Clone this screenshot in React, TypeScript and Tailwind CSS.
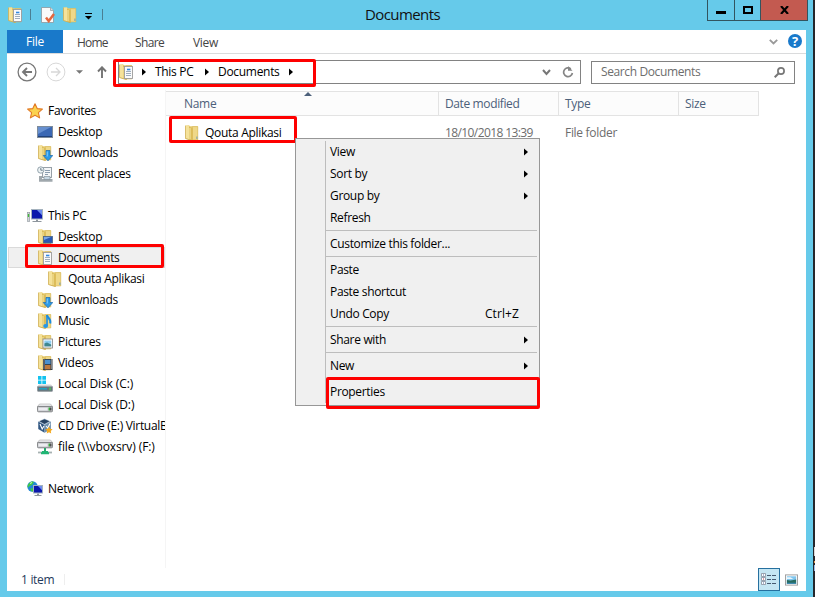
import React from "react";
import clsx from "clsx";

type IconName =
  | "folder"
  | "documents"
  | "desktop"
  | "desktopFolder"
  | "downloads"
  | "recent"
  | "computer"
  | "music"
  | "pictures"
  | "videos"
  | "diskC"
  | "diskD"
  | "cd"
  | "netDrive"
  | "network"
  | "star";

interface TreeItem {
  label: string;
  icon: IconName;
  level: number;
  selected?: boolean;
  wide?: boolean;
}

interface MenuEntry {
  label: string;
  shortcut?: string;
  submenu?: boolean;
}

const tree: (TreeItem | null)[] = [
  { label: "Favorites", icon: "star", level: 0 },
  { label: "Desktop", icon: "desktop", level: 1 },
  { label: "Downloads", icon: "downloads", level: 1 },
  { label: "Recent places", icon: "recent", level: 1 },
  null,
  { label: "This PC", icon: "computer", level: 0 },
  { label: "Desktop", icon: "desktopFolder", level: 1 },
  { label: "Documents", icon: "documents", level: 1, selected: true },
  { label: "Qouta Aplikasi", icon: "folder", level: 2 },
  { label: "Downloads", icon: "downloads", level: 1 },
  { label: "Music", icon: "music", level: 1 },
  { label: "Pictures", icon: "pictures", level: 1 },
  { label: "Videos", icon: "videos", level: 1 },
  { label: "Local Disk (C:)", icon: "diskC", level: 1, wide: true },
  { label: "Local Disk (D:)", icon: "diskD", level: 1, wide: true },
  { label: "CD Drive (E:) VirtualB", icon: "cd", level: 1 },
  { label: "file (\\\\vboxsrv) (F:)", icon: "netDrive", level: 1, wide: true },
  null,
  { label: "Network", icon: "network", level: 0 },
];

const menuGroups: MenuEntry[][] = [
  [
    { label: "View", submenu: true },
    { label: "Sort by", submenu: true },
    { label: "Group by", submenu: true },
    { label: "Refresh" },
  ],
  [{ label: "Customize this folder..." }],
  [
    { label: "Paste" },
    { label: "Paste shortcut" },
    { label: "Undo Copy", shortcut: "Ctrl+Z" },
  ],
  [{ label: "Share with", submenu: true }],
  [{ label: "New", submenu: true }],
  [{ label: "Properties" }],
];

const FolderShape = () => (
  <>
    <path d="M1.5.8 5 .2 6 1.2h7.8V15H5L1.5 13.8Z" fill="#e6ca72" />
    <path d="M8.4 1.6h5.4V15H8.4Z" fill="#efd888" stroke="#d3b253" strokeWidth=".5" />
    <path d="M1.5.6H5v13.6l-3.5-1Z" fill="#f5e29a" />
    <path d="M5 1.8 8.8 3.2V16L5 14.6Z" fill="#dcbc59" />
    <path d="M6 3v11.4" stroke="#f7e9a9" strokeWidth="1" />
    <path d="M1.5.6v12.9L5 14.6 8.8 16" fill="none" stroke="#c6a344" strokeWidth=".6" />
  </>
);

const DiskShape = ({ y = 8 }: { y?: number }) => (
  <g transform={`translate(0 ${y})`}>
    <path d="M2.5 0h11L16 3H0Z" fill="#eeeef0" stroke="#999" strokeWidth=".5" />
    <rect x=".4" y="2.4" width="15.2" height="5.4" rx="1.2" fill="#c9cacd" stroke="#66686c" strokeWidth=".8" />
    <rect x="1.5" y="3.8" width="9" height="2.6" fill="#ececf0" />
    <path d="M11.6 3.5h1.4v3h-1.4Z" fill="#34a93a" />
    <path d="M13.2 3.5h1.2v3h-1.2Z" fill="#333" />
  </g>
);

const Monitor = ({ x, y, w, h }: { x: number; y: number; w: number; h: number }) => (
  <>
    <rect x={x + w / 2 - 1} y={y + h} width="2" height="2" fill="#8e969d" />
    <path d={`M${x + 1.5} ${y + h + 2}h${w - 3}`} stroke="#8e969d" />
    <rect x={x} y={y} width={w} height={h} fill="#a4b2be" />
    <rect x={x + 1} y={y + 1} width={w - 2} height={h - 2} fill="#0b18ac" />
    <path d={`M${x + w / 2} ${y + 1}h${w / 2 - 1}v${h / 2}Z`} fill="#6d8cf0" />
  </>
);

const drawings: Record<IconName, React.ReactNode> = {
  folder: (
    <>
      <FolderShape />
      <path d="M12.4 11.5h1v2.5h-1Z" fill="#6f9fb8" />
    </>
  ),
  documents: (
    <>
      <FolderShape />
      <rect x="6.5" y="2.5" width="8" height="12" fill="#fbfbfb" stroke="#9c9c9c" strokeWidth=".9" />
      <path d="M8 7.5h5M8 9.5h5M8 11.5h5" stroke="#94a5b5" strokeWidth=".9" />
      <path d="M9 5.5h3.4" stroke="#3188e0" strokeWidth="1.6" />
    </>
  ),
  desktop: (
    <>
      <rect x=".5" y="2.5" width="15" height="11" fill="#3b68b4" stroke="#7d8b9b" />
      <path d="M1 3h13L1 10Z" fill="#6790d0" />
      <path d="M1 12.5h14" stroke="#20417b" />
    </>
  ),
  desktopFolder: (
    <>
      <FolderShape />
      <rect x="6.5" y="7.5" width="9" height="6.5" fill="#2858b2" stroke="#4d6788" strokeWidth=".8" />
      <path d="m7 8 7 0-7 3Z" fill="#78a6e8" />
      <path d="M8 15.3h6" stroke="#70777e" />
    </>
  ),
  downloads: (
    <>
      <FolderShape />
      <path d="M9 5.5h4v5h2.8L11 15.8 6.2 10.5H9Z" fill="#2c9be9" stroke="#1767ad" strokeWidth=".7" />
      <path d="M10.2 6.5v5" stroke="#8bd2ff" />
    </>
  ),
  recent: (
    <>
      <rect x="5.5" y="1.5" width="9" height="10" fill="#f4f6f8" stroke="#8d979e" strokeWidth=".9" />
      <path d="M8 4.5h5M8 6.5h5M8 8.5h3" stroke="#7f94a6" strokeWidth=".9" />
      <circle cx="3.8" cy="4" r="3.2" fill="#edf3f5" stroke="#8a9ba5" strokeWidth=".9" />
      <path d="M3.8 2v2.2h2" fill="none" stroke="#4c6170" strokeWidth=".8" />
      <path d="M2 10h3v3h10.5v2.7H2Z" fill="#a0a8ad" />
      <path d="M7 10.5h6v3H7Z" fill="#c7d8e4" stroke="#7b868e" strokeWidth=".6" />
    </>
  ),
  computer: (
    <>
      <rect x=".5" y="4.5" width="2.2" height="9" fill="#d0d4d7" stroke="#8e969d" strokeWidth=".6" />
      <path d="M1.5 6v3" stroke="#3fba36" strokeWidth="1.2" />
      <Monitor x={4} y={1} w={12} h={10.5} />
    </>
  ),
  music: (
    <>
      <FolderShape />
      <path d="M10 2c.5 3.4 4.4 3.4 3.2 8.5" fill="none" stroke="#198ce0" strokeWidth="2" />
      <path d="M10 2v11" stroke="#198ce0" strokeWidth="1.6" />
      <ellipse cx="8.6" cy="13" rx="2.4" ry="2" fill="#2797e8" />
    </>
  ),
  pictures: (
    <>
      <FolderShape />
      <rect x="6" y="5" width="9.5" height="9" fill="#fff" stroke="#8f8f8f" strokeWidth=".9" />
      <rect x="7.3" y="6.5" width="7" height="3.3" fill="#8dcdf1" />
      <path d="M7.3 9.4 10 8.5l4.3 2v2h-7Z" fill="#3f8791" />
    </>
  ),
  videos: (
    <>
      <FolderShape />
      <rect x="6" y="4" width="9.5" height="11" fill="#343b43" />
      <rect x="8" y="4.8" width="5.5" height="4.3" fill="#4991cf" />
      <rect x="8" y="10" width="5.5" height="4.3" fill="#bd793c" />
      <path d="M7 4.5v10M14.5 4.5v10" stroke="#e0e0e0" strokeWidth=".9" strokeDasharray="1 1" />
    </>
  ),
  diskC: (
    <>
      <path d="M1 0h3.5v3.7H1ZM5.3 0H9v3.7H5.3ZM1 4.5h3.5V8H1ZM5.3 4.5H9V8H5.3Z" fill="#12c2ef" />
      <path d="m2 8.5 12 0 2 2.5H0Z" fill="#d4d7da" />
      <rect x=".3" y="10.4" width="15.4" height="5" rx=".8" fill="#66767f" stroke="#9a9fa3" strokeWidth=".7" />
      <path d="M2 12.8h8" stroke="#25a0be" strokeWidth="1.6" />
      <path d="M13 11.5v2.8" stroke="#48df46" strokeWidth="1.2" />
    </>
  ),
  diskD: <DiskShape y={7} />,
  cd: (
    <>
      <path d="M7.5.5 14 3.5V11l-6.5 4L1 11V3.5Z" fill="#b7c8d8" />
      <path d="m1.4 3.7 6 3.2v7.5L1.4 11Z" fill="#315681" />
      <path d="m2.5 3.2 5-2 5 2-5 2.7Z" fill="#274263" />
      <path d="m13.8 3.7-6 3.2v7.5l6-3.4Z" fill="#6d8fad" />
      <path d="m3 6 2.2 5L7 8M9 8l1.8 2L13 5.5" fill="none" stroke="#fff" strokeWidth="1.1" />
      <path d="m12 8.6 1.1 2.2 2.5.4-1.8 1.7.4 2.5-2.2-1.2-2.3 1.2.5-2.5-1.8-1.7 2.5-.4Z" fill="#f4a91d" />
    </>
  ),
  netDrive: (
    <>
      <DiskShape y={1} />
      <path d="M7 9h2v3.5H7Z" fill="#28a86b" />
      <path d="M1 13.5h14" stroke="#a6b2b2" strokeWidth="1.8" />
      <path d="M5 12h6v1.3h1v1.9H4v-1.9h1Z" fill="#20b574" />
    </>
  ),
  network: (
    <>
      <circle cx="5.5" cy="5.5" r="5.2" fill="#2489d6" />
      <path d="M2 2.4C4 0 6 .3 7 1L5 4 2.5 5 1 6.8C0 5 1 3 2 2.4ZM4 7l3 1-1 2.5C4 11 3 9 4 7Z" fill="#42c944" />
      <path d="M3 2.5 5 1.5" stroke="#d3f5cb" />
      <Monitor x={6} y={4} w={10} h={8.5} />
    </>
  ),
  star: (
    <path
      d="m8 .8 2.2 4.8 5.2.5-4 3.5 1.2 5.3L8 12.2l-4.6 2.7 1.2-5.3-4-3.5 5.2-.5Z"
      fill="#fbd24e"
      stroke="#e27a25"
      strokeWidth="1.1"
      strokeLinejoin="round"
    />
  ),
};

const Icon = ({ name }: { name: IconName }) => (
  <svg viewBox="0 0 16 16" className="h-4 w-4 shrink-0">
    {drawings[name]}
  </svg>
);

const RightArrow = ({ className }: { className?: string }) => (
  <svg viewBox="0 0 4 8" className={clsx("h-2 w-1 shrink-0", className)}>
    <path d="M0 .5v7L4 4Z" fill="currentColor" />
  </svg>
);

// Red frame that marks a step of the walkthrough
const Highlight = ({ className }: { className: string }) => (
  <div className={clsx("pointer-events-none absolute rounded-[2px] border-[3px] border-[#fe0000]", className)} />
);

const TitleBar = () => (
  <header className="relative flex h-[30px] items-start justify-between">
    <div className="flex h-[29px] items-center pl-[7px]">
      <Icon name="documents" />
      <span className="ml-[7px] h-[11px] w-px bg-[#4a7f93]" />
      <svg viewBox="0 0 16 16" className="ml-[9px] h-4 w-4">
        <path d="M1.5.5h9l3 3v12h-12Z" fill="#fafafa" stroke="#8b989e" strokeWidth=".8" />
        <path d="M10.5.5v3h3" fill="#ddd" stroke="#8b989e" strokeWidth=".7" />
        <path d="m6 10.5 2.7 3.5L14 7" fill="none" stroke="#e3683f" strokeWidth="2.5" />
      </svg>
      <span className="ml-[6px] flex">
        <Icon name="folder" />
      </span>
      <svg viewBox="0 0 7 7" className="ml-[7px] mt-[3px] h-[7px] w-[7px]">
        <path d="M0 .5h7" stroke="#000" />
        <path d="M0 3h7L3.5 6.5Z" fill="#000" />
      </svg>
      <span className="ml-[10px] h-[11px] w-px bg-[#4a7f93]" />
    </div>
    <h1 className="absolute inset-x-0 top-[4px] mx-auto w-[120px] -translate-x-[4px] text-center text-[15px] leading-[21px] tracking-[-0.6px] text-[#111]">
      Documents
    </h1>
    <div className="mr-[5px] flex h-[21px] border border-t-0 border-[#32545f]">
      <button className="flex w-[27px] items-center justify-center border-r border-[#32545f]" aria-label="Minimize">
        <span className="mt-[5px] h-[3px] w-[10px] bg-black" />
      </button>
      <button className="flex w-[26px] items-center justify-center border-r border-[#32545f]" aria-label="Maximize">
        <span className="h-2 w-[10px] border-2 border-black" />
      </button>
      <button className="flex w-[46px] items-center justify-center bg-[#c35a50]" aria-label="Close">
        <svg viewBox="0 0 9 8" className="h-2 w-[9px]">
          <path d="m1 0 7 8M8 0 1 8" stroke="#000" strokeWidth="2.1" />
        </svg>
      </button>
    </div>
  </header>
);

const Ribbon = () => (
  <nav className="flex h-6 items-stretch border-b border-[#dadbdc] text-[#444]">
    <span className="-mb-px mr-[14px] flex h-[23px] w-14 items-center justify-center bg-[#1979ca] text-white">File</span>
    <span className="flex w-[58px] items-center pt-[3px] tracking-[-0.8px]">Home</span>
    <span className="flex w-[58px] items-center pt-[3px] tracking-[-0.6px]">Share</span>
    <span className="flex items-center pt-[3px]">View</span>
    <div className="ml-auto flex items-center gap-[10px] pr-1">
      <svg viewBox="0 0 9 6" className="h-[6px] w-[9px]">
        <path d="m.8 .8 3.7 3.7L8.2.8" fill="none" stroke="#999" strokeWidth="1.8" />
      </svg>
      <span className="-mt-px flex h-[14px] w-[14px] items-center justify-center rounded-full bg-[#1979ca] text-[13px] font-bold leading-none tracking-normal text-white">
        ?
      </span>
    </div>
  </nav>
);

const AddressRow = () => (
  <div className="flex h-9 items-center pl-[10px] pr-[11px]">
    <svg viewBox="0 0 20 20" className="h-5 w-5" fill="none" stroke="#777">
      <circle cx="10" cy="10" r="8.9" strokeWidth="1.3" />
      <path d="M15 10H6m4-4-4 4 4 4" strokeWidth="1.9" />
    </svg>
    <svg viewBox="0 0 20 20" className="ml-[9px] h-5 w-5" fill="none" stroke="#d8d8d8">
      <circle cx="10" cy="10" r="8.9" />
      <path d="M5 10h9m-4-4 4 4-4 4" strokeWidth="1.3" />
    </svg>
    <svg viewBox="0 0 8 4" className="ml-[10px] h-1 w-[7px]">
      <path d="M0 0h8L4 4Z" fill="#777" />
    </svg>
    <svg viewBox="0 0 10 12" className="ml-[14px] h-3 w-[10px]" fill="none" stroke="#737373">
      <path d="M5 12V1M1 5.5 5 1.3l4 4.2" strokeWidth="1.9" />
    </svg>
    <div className="ml-[11px] flex h-6 w-[463px] items-center border border-[#828282] text-black">
      <span className="-ml-px flex">
        <Icon name="documents" />
      </span>
      <RightArrow className="ml-[8px]" />
      <span className="ml-[9px] w-[50px]">This PC</span>
      <RightArrow />
      <span className="ml-[9px] w-[71px]">Documents</span>
      <RightArrow />
      <svg viewBox="0 0 9 7" className="ml-auto h-[7px] w-[9px]">
        <path d="m1 1 3.5 4L8 1" fill="none" stroke="#777" strokeWidth="2" />
      </svg>
      <svg viewBox="0 0 12 12" className="ml-[11px] mr-[6px] h-3 w-3">
        <path d="M8.8 2.8A4.4 4.4 0 1 0 10.4 7" fill="none" stroke="#858585" strokeWidth="1.7" />
        <path d="M6 0v4.8h4.5Z" fill="#858585" />
      </svg>
    </div>
    <div className="ml-auto flex h-[23px] w-[204px] items-center justify-between border border-[#828282] pl-[9px] pr-[9px] text-[#6d6d6d]">
      <span className="tracking-[-0.38px]">Search Documents</span>
      <svg viewBox="0 0 11 11" className="h-[11px] w-[11px]" fill="none" stroke="#777">
        <circle cx="7" cy="4" r="3.1" strokeWidth="1.7" />
        <path d="M4.7 6.3.7 10.3" strokeWidth="2" />
      </svg>
    </div>
  </div>
);

const NavigationPane = () => (
  <aside className="w-[159px] shrink-0 overflow-hidden border-r border-[#f5f5f5] pt-[10px]">
    {tree.map((item, i) =>
      item ? (
        <div
          key={i}
          className={clsx(
            "flex h-[21px] items-center whitespace-nowrap",
            item.selected && "ml-px border border-[#dadada] bg-[#f0f0f0]",
            item.level === 0 && "pl-5",
            item.level === 1 && (item.selected ? "pl-7" : "pl-[30px]"),
            item.level === 2 && "pl-10"
          )}
        >
          <Icon name={item.icon} />
          <span className={clsx("ml-[5px]", item.wide && "tracking-[-0.1px]")}>{item.label}</span>
        </div>
      ) : (
        <div key={i} className="h-[21px]" />
      )
    )}
  </aside>
);

const FileList = () => (
  <main className="min-w-0 flex-1 pt-px">
    <div className="relative flex h-[25px] w-[593px] items-center border-y border-[#e3e3e3] bg-[#fcfcfc] text-[#4c607a]">
      <svg viewBox="0 0 8 4" className="absolute left-[138px] top-0 h-1 w-2">
        <path d="M0 4h8L4 0Z" fill="#4c607a" />
      </svg>
      <span className="flex h-full w-[273px] items-center border-r border-[#e3e3e3] pl-[18px]">Name</span>
      <span className="flex h-full w-[120px] items-center border-r border-[#e3e3e3] pl-[6px] tracking-[-0.38px]">
        Date modified
      </span>
      <span className="flex h-full w-[120px] items-center border-r border-[#e3e3e3] pl-[6px]">Type</span>
      <span className="flex h-full w-20 items-center border-r border-[#e3e3e3] pl-[6px]">Size</span>
    </div>
    <div className="mt-[6px] flex h-[22px] items-center text-[#6d6d6d]">
      <div className="flex w-[279px] items-center pl-[18px] text-black">
        <Icon name="folder" />
        <span className="ml-[5px]">Qouta Aplikasi</span>
      </div>
      <span className="w-[120px] tracking-[-0.6px]">18/10/2018 13:39</span>
      <span>File folder</span>
    </div>
  </main>
);

const StatusBar = () => (
  <footer className="flex h-[23px] items-center pl-[14px] text-[#1e395b]">
    <span className="w-[43px]">1 item</span>
    <span className="h-[11px] w-px bg-[#eee]" />
    <div className="ml-auto mr-[5px] flex h-[23px] w-[22px] items-center justify-center border border-[#26709f] bg-[#c5e6f3]">
      <svg viewBox="0 0 16 13" className="h-[13px] w-4">
        <path d="M.5.5h4v3h-4ZM.5 4.5h4v3h-4ZM.5 8.5h4v3h-4Z" fill="#fff" stroke="#888e9c" strokeWidth=".8" />
        <path d="M2 2h1M2 10h1" stroke="#536ca2" />
        <path d="M2 6h1" stroke="#c03050" />
        <path d="M6 2.5h4M11 2.5h4M6 6.5h4M11 6.5h4M6 10.5h4M11 10.5h4" stroke="#465970" />
      </svg>
    </div>
    <svg viewBox="0 0 14 12" className="mr-2 h-3 w-[13px]">
      <rect x=".5" y=".5" width="13" height="11" fill="#fff" stroke="#9b9b9b" />
      <rect x="2" y="2" width="10" height="8" fill="#7fc5ed" />
      <path d="M2 3h4l3 2H2Z" fill="#e9f6fc" />
      <path d="m2 6 4 .5 6-1V10H2Z" fill="#286b60" />
      <path d="M2 9h10v1H2Z" fill="#3b8dc1" />
    </svg>
  </footer>
);

const ContextMenu = () => (
  <div className="absolute left-[295px] top-[138px] h-[268px] w-[245px] border border-[#979797] bg-[#f0f0f0] py-[2px] text-black">
    <div className="ml-[29px] mr-[2px] border-l border-[#bdbdbd]">
      {menuGroups.map((group, i) => (
        <div key={i}>
          {i > 0 && <div className="mb-[2px] mt-px h-px bg-[#bdbdbd]" />}
          {group.map((entry) => (
            <div key={entry.label} className="flex h-[22px] items-center pl-[4px] pr-[9px] tracking-[-0.33px]">
              <span>{entry.label}</span>
              {entry.shortcut && <span className="ml-auto mr-[9px] tracking-[0.1px]">{entry.shortcut}</span>}
              {entry.submenu && <RightArrow className="ml-auto" />}
            </div>
          ))}
        </div>
      ))}
    </div>
  </div>
);

export default function App() {
  return (
    <div className="relative flex h-[597px] w-[815px] overflow-hidden bg-[#25272b] font-['Open_Sans','Noto_Sans',sans-serif] text-[12px] leading-4 tracking-[-0.3px] text-black">
      <div className="h-full w-[813px] bg-[#66caea]">
        <TitleBar />
        <div className="ml-[7px] flex h-[561px] w-[799px] flex-col bg-white">
          <Ribbon />
          <AddressRow />
          <div className="flex min-h-0 flex-1">
            <NavigationPane />
            <FileList />
          </div>
          <StatusBar />
        </div>
      </div>
      {/* sliver of a desktop shortcut behind the window */}
      <div className="flex flex-1 flex-col items-end pt-[547px]">
        <span className="h-[9px] w-px bg-[#d8d8d8]" />
        <span className="mt-[5px] h-[2px] w-px bg-[#e9a25c]" />
        <span className="mt-[2px] h-[6px] w-px bg-[#9dbce8]" />
      </div>

      <Highlight className="left-[169px] top-[116px] h-[27px] w-[128px]" />
      <ContextMenu />
      <Highlight className="left-[113px] top-[59px] h-[28px] w-[203px]" />
      <Highlight className="left-[25px] top-[244px] h-[24px] w-[139px]" />
      <Highlight className="left-[326px] top-[377px] h-[32px] w-[214px]" />
    </div>
  );
}
